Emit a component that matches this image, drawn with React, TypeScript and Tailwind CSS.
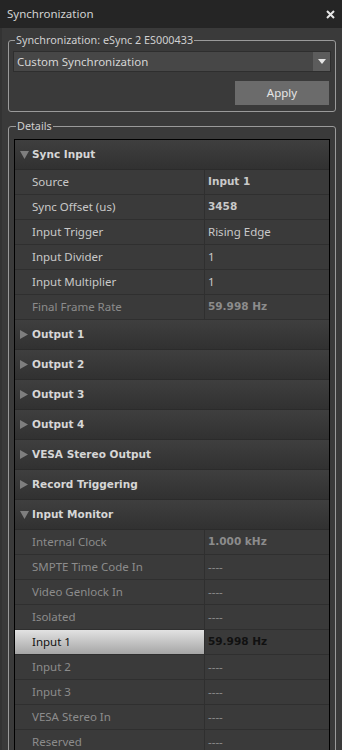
import React from "react";

type Row = { label: string; value: string; labelDim?: boolean; valueBold?: boolean; valueDim?: boolean; selected?: boolean };

const syncRows: Row[] = [
  { label: "Source", value: "Input 1", valueBold: true },
  { label: "Sync Offset (us)", value: "3458", valueBold: true },
  { label: "Input Trigger", value: "Rising Edge" },
  { label: "Input Divider", value: "1" },
  { label: "Input Multiplier", value: "1" },
  { label: "Final Frame Rate", value: "59.998 Hz", labelDim: true, valueBold: true, valueDim: true },
];

const monitorRows: Row[] = [
  { label: "Internal Clock", value: "1.000 kHz", labelDim: true, valueBold: true, valueDim: true },
  { label: "SMPTE Time Code In", value: "----", labelDim: true, valueDim: true },
  { label: "Video Genlock In", value: "----", labelDim: true, valueDim: true },
  { label: "Isolated", value: "----", labelDim: true, valueDim: true },
  { label: "Input 1", value: "59.998 Hz", selected: true, valueBold: true },
  { label: "Input 2", value: "----", labelDim: true, valueDim: true },
  { label: "Input 3", value: "----", labelDim: true, valueDim: true },
  { label: "VESA Stereo In", value: "----", labelDim: true, valueDim: true },
  { label: "Reserved", value: "----", labelDim: true, valueDim: true },
];

const ui = { fontFamily: '"Noto Sans", "DejaVu Sans", sans-serif' };
const bold = { fontFamily: '"DejaVu Sans", Verdana, sans-serif' };

function Header({ title, open }: { title: string; open: boolean }) {
  return (
    <div className="flex h-[30px] items-center bg-gradient-to-b from-[#3f3f3f] to-[#313131] border-b border-[#2b2b2b]">
      <div className="w-[17px] flex justify-center pl-[1px]">
        {open ? (
          <svg width="9" height="8" viewBox="0 0 9 8"><path d="M0 0 H9 L4.5 8 Z" fill="#7e7e7e" /></svg>
        ) : (
          <svg width="8" height="9" viewBox="0 0 8 9"><path d="M0 0 L8 4.5 L0 9 Z" fill="#7e7e7e" /></svg>
        )}
      </div>
      <span className="text-[10.5px] font-bold text-[#d6d6d6]" style={bold}>{title}</span>
    </div>
  );
}

function PropRow({ r }: { r: Row }) {
  return (
    <div className="flex h-[25px] border-b border-[#2f2f2f] bg-[#3a3a3a]">
      <div
        className={
          r.selected
            ? "w-[189px] flex items-center pl-[17px] bg-gradient-to-b from-[#e2e2e2] to-[#a6a6a6] text-[#111] text-[11.5px]"
            : "w-[189px] flex items-center pl-[17px] text-[11.5px] " + (r.labelDim ? "text-[#8c8c8c]" : "text-[#c9c9c9]")
        }
        style={ui}
      >
        {r.label}
      </div>
      <div className="w-px bg-[#2f2f2f]" />
      <div
        className={
          "flex-1 flex items-center pl-[3px] " +
          (r.selected ? "text-[#111]" : r.valueDim ? "text-[#8c8c8c]" : "text-[#c9c9c9]")
        }
      >
        {r.valueBold ? (
          <span className="text-[10.5px] font-bold" style={bold}>{r.value}</span>
        ) : (
          <span className="text-[11.5px]" style={ui}>{r.value}</span>
        )}
      </div>
    </div>
  );
}

export default function App() {
  return (
    <div className="w-[342px] h-[750px] overflow-hidden bg-[#3a3a3a] flex flex-col" style={ui}>
      <div className="h-[28px] bg-[#252525] flex items-center justify-between pl-[7px] pr-[7px] shrink-0">
        <span className="text-[11.5px] text-[#d2d2d2]">Synchronization</span>
        <svg width="9" height="9" viewBox="0 0 9 9">
          <path d="M1 1 L8 8 M8 1 L1 8" stroke="#e6e6e6" strokeWidth="2" />
        </svg>
      </div>
      <div className="flex-1 border-l-[2px] border-[#333] pl-[6px] pr-[6px]">
        <fieldset className="mt-[5px] border border-[#9a9a9a] rounded-[3px] px-[4px] pb-[6px]">
          <legend className="ml-[2px] px-[1px] text-[10.8px] leading-[14px] text-[#d0d0d0]">
            Synchronization: eSync 2 ES000433
          </legend>
          <div className="mt-[4px] h-[21px] flex border border-[#2e2e2e] bg-[#474747]">
            <div className="flex-1 flex items-center pl-[3px] text-[11.5px] text-[#d6d6d6]">Custom Synchronization</div>
            <div className="w-[17px] bg-[#5c5c5c] flex items-center justify-center">
              <svg width="8" height="5" viewBox="0 0 8 5"><path d="M0 0 H8 L4 5 Z" fill="#e6e6e6" /></svg>
            </div>
          </div>
          <div className="flex justify-end mt-[9px]">
            <div className="w-[94px] h-[24px] bg-[#6b6b6b] flex items-center justify-center text-[11.5px] text-[#e6e6e6] mr-[2px]">
              Apply
            </div>
          </div>
        </fieldset>
        <fieldset className="mt-[7px] border border-[#9a9a9a] rounded-[3px] px-[5px] pb-[6px]">
          <legend className="ml-[2px] px-[1px] text-[10.8px] leading-[14px] text-[#d0d0d0]">Details</legend>
          <div className="mt-[6px] border border-black bg-[#3a3a3a]">
            <Header title="Sync Input" open />
            {syncRows.map((r) => (
              <PropRow key={r.label} r={r} />
            ))}
            <Header title="Output 1" open={false} />
            <Header title="Output 2" open={false} />
            <Header title="Output 3" open={false} />
            <Header title="Output 4" open={false} />
            <Header title="VESA Stereo Output" open={false} />
            <Header title="Record Triggering" open={false} />
            <Header title="Input Monitor" open />
            {monitorRows.map((r) => (
              <PropRow key={r.label} r={r} />
            ))}
          </div>
        </fieldset>
      </div>
    </div>
  );
}
